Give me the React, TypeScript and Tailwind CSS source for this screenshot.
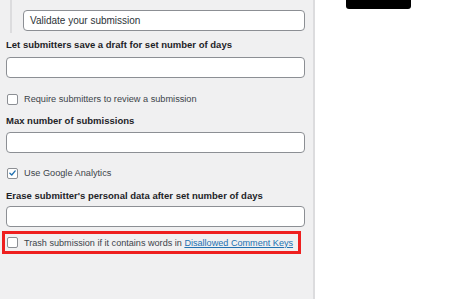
import React from 'react';

const Field = ({ value = '' }: { value?: string }) => (
  <div className="h-[21px] w-full rounded-[4px] border border-[#8c8f94] bg-white px-[6px] text-[10px] leading-[19px] text-[#2c3338]">
    {value}
  </div>
);

const Check = ({ checked = false }: { checked?: boolean }) => (
  <span className="flex h-[11px] w-[11px] shrink-0 items-center justify-center rounded-[2px] border border-[#8c8f94] bg-white">
    {checked && (
      <svg viewBox="0 0 12 12" className="h-[10px] w-[10px]">
        <path d="M2.5 6.2 L5 8.6 L9.6 3.2" fill="none" stroke="#2271b1" strokeWidth="1.8" strokeLinecap="round" strokeLinejoin="round" />
      </svg>
    )}
  </span>
);

const Label = ({ children }: { children: React.ReactNode }) => (
  <div className="text-[9.5px] font-bold leading-[12px] text-[#1d2327]">{children}</div>
);

export default function App() {
  return (
    <div className="flex h-[304px] w-[474px] overflow-hidden bg-white" style={{ fontFamily: '"Liberation Sans", Arial, sans-serif' }}>
      <div className="flex h-[299px] w-[315px] shrink-0 flex-col border-r-2 border-[#dcdcde] bg-[#f0f0f1] pl-[6px] pr-[8px]">
        {/* nested section */}
        <div className="-mt-[9px] ml-[4px] flex flex-col gap-[7px] border-l-2 border-[#dcdcde] pb-[2px] pl-[11px]">
          <Label>Label</Label>
          <Field value="Validate your submission" />
        </div>

        <div className="mt-[6px] flex flex-col gap-[6px]">
          <Label>Let submitters save a draft for set number of days</Label>
          <Field />
        </div>

        <label className="mt-[15px] flex items-center gap-[6px] pl-[1px] text-[9.2px] leading-[12px] text-[#3c434a]">
          <Check />
          Require submitters to review a submission
        </label>

        <div className="mt-[10px] flex flex-col gap-[5px]">
          <Label>Max number of submissions</Label>
          <Field />
        </div>

        <label className="mt-[14px] flex items-center gap-[6px] pl-[1px] text-[9.2px] leading-[12px] text-[#3c434a]">
          <Check checked />
          Use Google Analytics
        </label>

        <div className="mt-[11px] flex flex-col gap-[4px]">
          <Label>Erase submitter's personal data after set number of days</Label>
          <Field />
        </div>

        <div className="-ml-[4px] mt-[4px] flex h-[23px] w-[299px] items-center gap-[6px] whitespace-nowrap border-[3px] border-[#ee1f1f] pl-[2px] text-[9.1px] leading-[12px] text-[#3c434a]">
          <Check />
          <span>
            Trash submission if it contains words in{' '}
            <span className="text-[#2271b1] underline">Disallowed Comment Keys</span>
          </span>
        </div>
      </div>

      <div className="flex-1">
        <div className="ml-[31px] h-[9px] w-[65px] rounded-b-[3px] bg-black" />
      </div>
    </div>
  );
}
